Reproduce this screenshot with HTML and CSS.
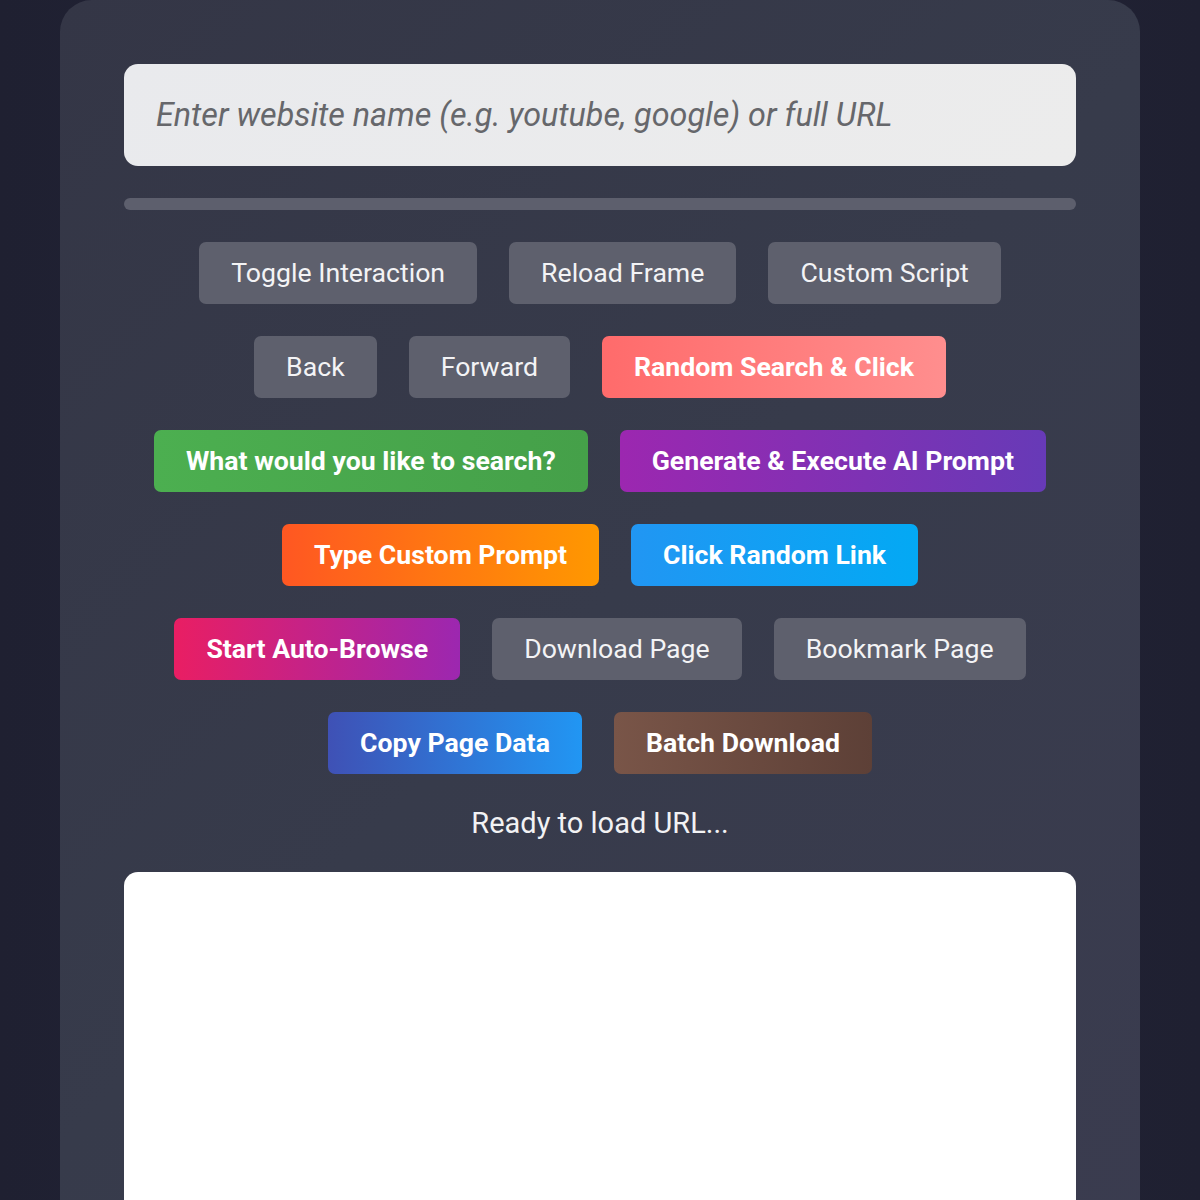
FILE: index.html
```html
<!DOCTYPE html>
<html lang="en">
<head>
<meta charset="utf-8">
<title>Web Browser Controller</title>
<link rel="stylesheet" href="styles.css">
</head>
<body>
<main class="panel">
  <input class="url-input" type="text" placeholder="Enter website name (e.g. youtube, google) or full URL">
  <div class="progress"><div class="progress-fill"></div></div>
  <div class="controls">
    <div class="row">
      <button class="btn">Toggle Interaction</button>
      <button class="btn">Reload Frame</button>
      <button class="btn">Custom Script</button>
    </div>
    <div class="row">
      <button class="btn">Back</button>
      <button class="btn">Forward</button>
      <button class="btn strong coral">Random Search &amp; Click</button>
    </div>
    <div class="row">
      <button class="btn strong green">What would you like to search?</button>
      <button class="btn strong purple">Generate &amp; Execute AI Prompt</button>
    </div>
    <div class="row">
      <button class="btn strong orange">Type Custom Prompt</button>
      <button class="btn strong sky">Click Random Link</button>
    </div>
    <div class="row">
      <button class="btn strong pink">Start Auto-Browse</button>
      <button class="btn">Download Page</button>
      <button class="btn">Bookmark Page</button>
    </div>
    <div class="row">
      <button class="btn strong indigo">Copy Page Data</button>
      <button class="btn strong brown">Batch Download</button>
    </div>
  </div>
  <p class="status">Ready to load URL...</p>
  <div class="frame"></div>
</main>
</body>
</html>
```
FILE: styles.css
```css
* { box-sizing: border-box; }

html, body {
  margin: 0;
  padding: 0;
}

body {
  background: linear-gradient(90deg, #1f2031 0%, #23253a 50%, #1f2031 100%);
  font-family: Roboto, "Noto Sans", "Liberation Sans", sans-serif;
  color: #f2f2f4;
  min-height: 1200px;
}

.panel {
  width: 1080px;
  margin: 0 auto;
  padding: 64px 64px 0;
  min-height: 1300px;
  border-radius: 32px 32px 0 0;
  background: linear-gradient(135deg, #343646 0%, #373b4b 45%, #3b3c50 100%);
  display: flex;
  flex-direction: column;
}

.url-input {
  display: block;
  width: 100%;
  height: 102px;
  padding: 0 32px;
  border: none;
  border-radius: 14px;
  background: linear-gradient(135deg, #e9eaed 0%, #ececec 100%);
  font-family: Roboto, "Noto Sans", sans-serif;
  font-size: 32.3px;
  color: #333;
  outline: none;
}

.url-input::placeholder {
  color: #66676b;
  font-style: italic;
}

.progress {
  margin-top: 32px;
  height: 12px;
  border-radius: 6px;
  background: #5d5f6d;
  overflow: hidden;
}

.progress-fill {
  width: 0;
  height: 100%;
}

.controls {
  margin-top: 32px;
  display: flex;
  flex-direction: column;
  gap: 32px;
}

.row {
  display: flex;
  justify-content: center;
  gap: 32px;
}

.btn {
  height: 62px;
  padding: 0 32px;
  border: none;
  border-radius: 7px;
  background: #5e606d;
  color: #f3f3f5;
  font-family: Roboto, "Noto Sans", sans-serif;
  font-size: 26.67px;
  font-weight: 400;
  white-space: nowrap;
  cursor: pointer;
}

.btn.strong { font-weight: 700; color: #fff; }

.coral  { background: linear-gradient(90deg, #ff6b6b, #ff8e8e); }
.green  { background: linear-gradient(90deg, #4caf50, #45a049); }
.purple { background: linear-gradient(90deg, #9c27b0, #673ab7); }
.orange { background: linear-gradient(90deg, #ff5722, #ff9800); }
.sky    { background: linear-gradient(90deg, #2196f3, #03a9f4); }
.pink   { background: linear-gradient(90deg, #e91e63, #9c27b0); }
.indigo { background: linear-gradient(90deg, #3f51b5, #2196f3); }
.brown  { background: linear-gradient(90deg, #795548, #5d4037); }

.status {
  margin: 32px 0 0;
  text-align: center;
  font-size: 29px;
  line-height: 34px;
  color: #f2f2f4;
}

.frame {
  margin-top: 32px;
  height: 600px;
  border-radius: 14px;
  background: #ffffff;
}
```
